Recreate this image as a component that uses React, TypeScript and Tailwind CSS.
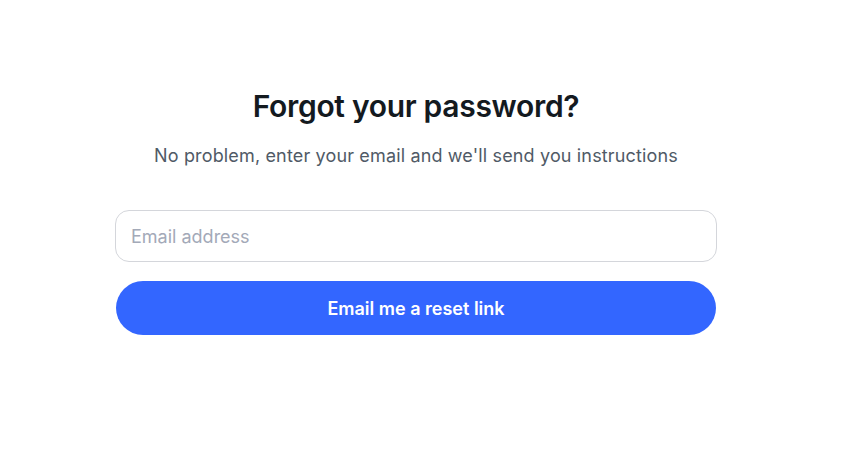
export default function App() {
  return (
    <div
      className="min-h-[461px] bg-white flex justify-center pr-[15px]"
      style={{ fontFamily: "Inter, 'Noto Sans', sans-serif" }}
    >
      <div className="w-[600px] flex flex-col items-center pt-[86px]">
        <h1 className="text-[30px] leading-[40px] font-semibold text-[#141a1f] tracking-[-0.3px]">
          Forgot your password?
        </h1>
        <p className="mt-[17px] text-[18px] leading-[26px] text-[#505a66] tracking-[0.15px]">
          No problem, enter your email and we'll send you instructions
        </p>
        <input
          type="email"
          placeholder="Email address"
          className="mt-[41px] w-[602px] h-[52px] rounded-[14px] border border-[#d4d6db] px-[15px] text-[18px] text-[#1f2937] placeholder:text-[#a3a9b8] outline-none"
        />
        <button className="mt-[19px] w-full h-[54px] rounded-full bg-[#3366ff] text-white text-[18px] font-semibold">
          Email me a reset link
        </button>
      </div>
    </div>
  );
}
